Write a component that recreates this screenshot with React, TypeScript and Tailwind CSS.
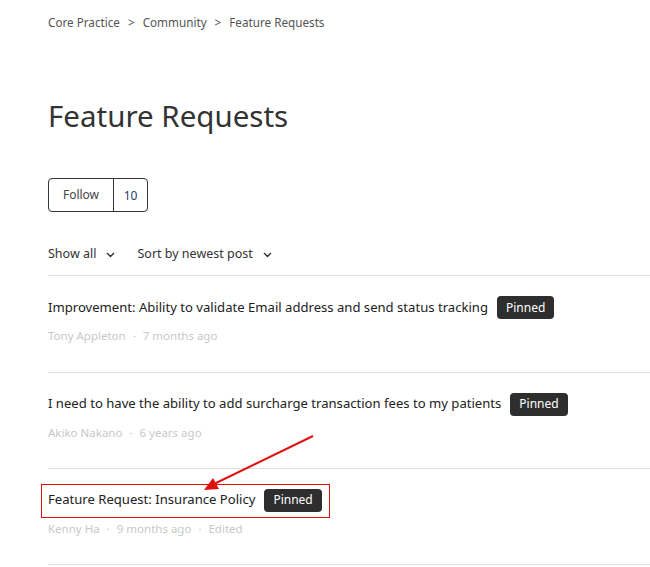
import React from "react";

const font = { fontFamily: '"Noto Sans", "Open Sans", sans-serif' };

function Chevron() {
  return (
    <svg width="9" height="6" viewBox="0 0 9 6" className="ml-[10px] mt-[2px]">
      <path d="M1 1 L4.5 4.5 L8 1" fill="none" stroke="#333" strokeWidth="1.4" />
    </svg>
  );
}

function Badge() {
  return (
    <span className="ml-[9px] inline-flex h-[23px] items-center rounded-[4px] bg-[#2e2e2e] px-[9px] text-[12px] text-white">
      Pinned
    </span>
  );
}

type Post = { title: string; meta: string[]; annotated?: boolean };

const posts: Post[] = [
  {
    title: "Improvement: Ability to validate Email address and send status tracking",
    meta: ["Tony Appleton", "7 months ago"],
  },
  {
    title: "I need to have the ability to add surcharge transaction fees to my patients",
    meta: ["Akiko Nakano", "6 years ago"],
  },
  {
    title: "Feature Request: Insurance Policy",
    meta: ["Kenny Ha", "9 months ago", "Edited"],
    annotated: true,
  },
];

export default function App() {
  return (
    <div className="relative h-[567px] w-[650px] overflow-hidden bg-white text-[#333]" style={font}>
      <div className="pl-[48px]">
        <nav className="flex items-center pt-[14px] text-[11.7px] text-[#555]">
          <span>Core Practice</span>
          <span className="mx-[8px]">&gt;</span>
          <span>Community</span>
          <span className="mx-[8px]">&gt;</span>
          <span>Feature Requests</span>
        </nav>
        <h1 className="mt-[62px] text-[29.5px] leading-[44px] text-[#333]">Feature Requests</h1>
        <div className="mt-[40px] flex h-[34px] w-[100px] items-stretch rounded-[4px] border border-[#333] text-[12px]">
          <div className="flex w-[65px] items-center justify-center border-r border-[#333] text-[#444]">Follow</div>
          <div className="flex flex-1 items-center justify-center pt-[3px] text-[#2b3a6b]">10</div>
        </div>
        <div className="mt-[33px] flex items-center text-[12.5px] text-[#333]">
          <span>Show all</span>
          <Chevron />
          <span className="ml-[22px]">Sort by newest post</span>
          <Chevron />
        </div>
        <div className="mt-[12px] border-b border-[#ddd]" />
        {posts.map((p, i) => (
          <div key={i} className="border-b border-[#ddd] pt-[20px] pb-[27px]">
            <div className="relative flex items-center">
              <span className="text-[13.1px] text-[#222]">{p.title}</span>
              <Badge />
              {p.annotated && (
                <div className="absolute left-[-7px] top-[-5px] h-[34px] w-[289px] border border-[#e01010]" />
              )}
            </div>
            <div className="mt-[8px] flex items-center text-[11.5px] text-[#c8c8c8]">
              {p.meta.map((m, j) => (
                <React.Fragment key={j}>
                  {j > 0 && <span className="mx-[7px]">·</span>}
                  <span>{m}</span>
                </React.Fragment>
              ))}
            </div>
          </div>
        ))}
      </div>
      <svg className="pointer-events-none absolute left-0 top-0" width="650" height="567">
        <line x1="313" y1="436" x2="214" y2="484" stroke="#e01010" strokeWidth="2" />
        <polygon points="204,490 213,478 219,489" fill="#e01010" />
      </svg>
    </div>
  );
}
